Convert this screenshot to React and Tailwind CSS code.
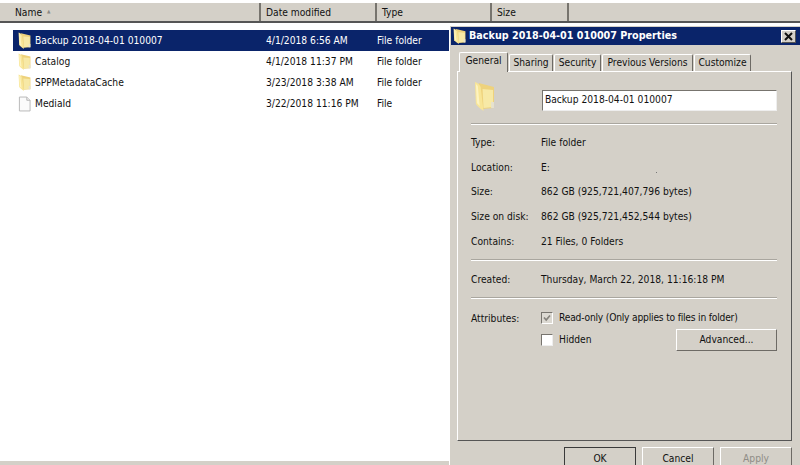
const files = [
  { name: 'Backup 2018-04-01 010007', date: '4/1/2018 6:56 AM', type: 'File folder', selected: true },
  { name: 'Catalog', date: '4/1/2018 11:37 PM', type: 'File folder' },
  { name: 'SPPMetadataCache', date: '3/23/2018 3:38 AM', type: 'File folder' },
  { name: 'MediaId', date: '3/22/2018 11:16 PM', type: 'File' },
];

const columns = [
  { label: 'Name', width: 'w-[261px]', pad: 'pl-[15px]' },
  { label: 'Date modified', width: 'w-[116px]', pad: 'pl-[5px]' },
  { label: 'Type', width: 'w-[115px]', pad: 'pl-[5px]' },
  { label: 'Size', width: 'w-[77px]', pad: 'pl-[5px]' },
];

const tabs = [
  { label: 'Sharing', width: 'w-[44px]' },
  { label: 'Security', width: 'w-[47px]' },
  { label: 'Previous Versions', width: 'w-[91px]' },
  { label: 'Customize', width: 'w-[57px]' },
];

const details = [
  { label: 'Type:', value: 'File folder' },
  { label: 'Location:', value: 'E:', dot: true },
  { label: 'Size:', value: '862 GB (925,721,407,796 bytes)' },
  { label: 'Size on disk:', value: '862 GB (925,721,452,544 bytes)' },
  { label: 'Contains:', value: '21 Files, 0 Folders' },
];

function FolderIcon({ className }) {
  return (
    <svg viewBox="0 0 22 30" preserveAspectRatio="none" className={className}>
      <path d="M5 2 L21 6 L21 27 L8 28 Z" fill="#eed27c" />
      <path d="M9 8 L20 9 L20 26 L10 27 Z" fill="#f7e9a6" />
      <path d="M1 1 Q5 2 7 6 L10 30 Q4 26 2 23 Z" fill="#f8e596" />
      <path d="M2 3 L4 5 L6 25 L3 22 Z" fill="#fdf3c0" />
      <rect x="18" y="21" width="3" height="6" fill="#e6e2cf" />
    </svg>
  );
}

function FileIcon({ className }) {
  return (
    <svg viewBox="0 0 14 16" className={className}>
      <path d="M1.5 0.5 H9.5 L13 4 V15.5 H1.5 Z" fill="#fbfbfb" stroke="#b4b4b4" />
      <path d="M9.5 0.5 V4 H13" fill="#eeeeee" stroke="#b4b4b4" />
    </svg>
  );
}

function Separator() {
  return <div className="h-[2px] bg-[#a9a69f] border-b border-white" />;
}

function Btn({ children, disabled, primary, className }) {
  return (
    <div
      className={`flex items-center justify-center bg-[#d4d0c8] border border-t-white border-l-white border-r-[#6d6a65] border-b-[#6d6a65] ${
        primary ? 'outline outline-[#3a3a3a] -outline-offset-1' : ''
      } ${disabled ? 'text-[#8f8c86]' : ''} ${className}`}
    >
      {children}
    </div>
  );
}

export default function App() {
  return (
    <div className="w-[800px] h-[465px] overflow-hidden flex flex-col bg-white text-[#111111] text-[10.2px] font-['DejaVu_Sans',sans-serif] font-stretch-condensed">
      <div className="h-[3px] shrink-0 bg-white" />
      <div className="h-[20px] shrink-0 flex bg-[#d4d0c8] border-b-2 border-[#555555]">
        {columns.map(col => (
          <div key={col.label} className={`${col.width} ${col.pad} flex items-center border-r-2 border-[#77746e]`}>
            <span className="pt-[2px]">{col.label}</span>
            {col.label === 'Name' && <span className="ml-[5px] text-[5px] text-[#8a8883]">▲</span>}
          </div>
        ))}
      </div>

      <div className="flex flex-1 min-h-0">
        <div className="w-[449px] flex flex-col">
          <div className="flex-1 pt-[7px] pl-[13px]">
            {files.map(f => (
              <div key={f.name} className={`h-[21px] flex items-center ${f.selected ? 'bg-[#0a246a] text-white' : ''}`}>
                <div className="w-[247px] flex items-center pl-[5px] gap-[4px]">
                  {f.type === 'File' ? <FileIcon className="w-[13px] h-[16px]" /> : <FolderIcon className="w-[13px] h-[17px]" />}
                  <span>{f.name}</span>
                </div>
                <div className="w-[117px] pl-[6px]">{f.date}</div>
                <div>{f.type}</div>
              </div>
            ))}
          </div>
          <div className="h-[4px] bg-[#d4d0c8]" />
        </div>

        <div className="flex-1 flex flex-col bg-[#d4d0c8] border-l border-t border-white pl-[1px] pt-[1px] mt-[2px]">
          <div className="h-[18px] shrink-0 bg-[#0a246a] text-white font-bold flex items-center pl-[2px] pr-[4px] gap-[3px] text-[10.7px]">
            <FolderIcon className="w-[13px] h-[16px]" />
            <span className="flex-1">Backup 2018-04-01 010007 Properties</span>
            <div className="w-[15px] h-[13px] bg-[#d4d0c8] border border-t-white border-l-white border-r-[#555555] border-b-[#555555] flex items-center justify-center">
              <svg viewBox="0 0 9 9" className="w-[9px] h-[9px]">
                <path d="M1 1 L8 8 M8 1 L1 8" stroke="#111111" strokeWidth="2" />
              </svg>
            </div>
          </div>

          <div className="flex items-end h-[26px] shrink-0 pl-[8px]">
            <div className="w-[49px] h-[20px] -mb-[1px] pb-[3px] z-10 bg-[#d4d0c8] border border-b-0 border-t-white border-l-white border-r-[#6d6a65] rounded-t-[2px] flex items-center justify-center">
              General
            </div>
            {tabs.map(t => (
              <div key={t.label} className={`${t.width} h-[17px] ml-[1px] bg-[#d4d0c8] border border-b-0 border-t-white border-l-white border-r-[#6d6a65] rounded-t-[2px] flex items-center justify-center`}>
                {t.label}
              </div>
            ))}
          </div>

          <div className="w-[335px] ml-[6px] h-[370px] shrink-0 border border-t-white border-l-white border-r-[#555555] border-b-[#555555] pl-[13px] pr-[14px] flex flex-col">
            <div className="flex items-center h-[51px]">
              <FolderIcon className="w-[21px] h-[30px] ml-[3px] -mt-[3px]" />
              <div className="ml-[47px] w-[236px] h-[21px] mt-[5px] bg-white border border-t-[#77746e] border-l-[#77746e] border-r-[#eeeeee] border-b-[#eeeeee] flex items-center pl-[2px]">
                Backup 2018-04-01 010007
              </div>
            </div>
            <Separator />
            <div className="pt-[5px] flex flex-col">
              {details.map(d => (
                <div key={d.label} className="h-[24.8px] flex items-center">
                  <div className="w-[70px]">{d.label}</div>
                  <div>{d.value}</div>
                  {d.dot && <div className="w-[1px] h-[1px] bg-[#777777] ml-[106px] mt-[10px]" />}
                </div>
              ))}
            </div>
            <div className="mt-[5px]"><Separator /></div>
            <div className="h-[36px] pt-[1px] flex items-center">
              <div className="w-[70px]">Created:</div>
              <div>Thursday, March 22, 2018, 11:16:18 PM</div>
            </div>
            <Separator />
            <div className="flex pt-[11px]">
              <div className="w-[70px] pt-[1px]">Attributes:</div>
              <div className="flex-1 flex flex-col">
                <div className="flex items-center h-[16px]">
                  <div className="w-[12px] h-[12px] bg-[#dcd9d2] border border-t-[#77746e] border-l-[#77746e] border-r-white border-b-white flex items-center justify-center">
                    <svg viewBox="0 0 10 10" className="w-[10px] h-[10px]">
                      <path d="M2 4.5 L4.2 7 L8 2.5" fill="none" stroke="#85827c" strokeWidth="1.7" />
                    </svg>
                  </div>
                  <span className="ml-[6px] tracking-[-0.2px]">Read-only (Only applies to files in folder)</span>
                </div>
                <div className="flex items-center mt-[3px] h-[22px]">
                  <div className="w-[12px] h-[12px] bg-white border border-t-[#77746e] border-l-[#77746e] border-r-[#eeeeee] border-b-[#eeeeee]" />
                  <span className="ml-[6px]">Hidden</span>
                  <Btn className="ml-auto w-[101px] h-[22px]">Advanced...</Btn>
                </div>
              </div>
            </div>
          </div>

          <div className="flex justify-end gap-[6px] pr-[8px] pt-[6px]">
            <Btn primary className="w-[72px] h-[24px] shrink-0">OK</Btn>
            <Btn className="w-[72px] h-[24px] shrink-0">Cancel</Btn>
            <Btn disabled className="w-[72px] h-[24px] shrink-0">Apply</Btn>
          </div>
        </div>
      </div>
    </div>
  );
}
